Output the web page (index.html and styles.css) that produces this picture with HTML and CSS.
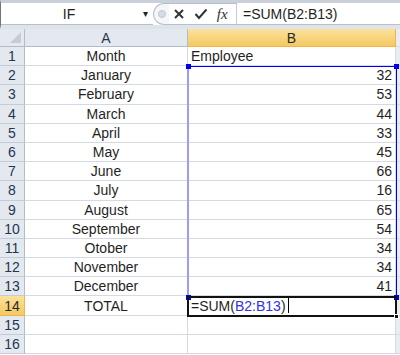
FILE: index.html
```html
<!DOCTYPE html>
<html lang="en">
  <head>
    <meta charset="UTF-8" />
    <title>SUM formula</title>
    <link rel="stylesheet" href="styles.css">
  </head>
  <body>
    <div class="formula-bar">
      <div class="name-box">
        <span class="name">IF</span>
        <span class="drop">&#9662;</span>
      </div>
      <div class="grip"><span class="dot"></span></div>
      <div class="tools">
        <svg class="ico" width="12" height="12" viewBox="0 0 12 12">
          <path d="M2 2 L10 10 M10 2 L2 10" stroke="#333" stroke-width="2" />
        </svg>
        <svg class="ico" width="14" height="12" viewBox="0 0 14 12">
          <path d="M1.5 6 L5 10 L12.5 1.5" stroke="#333" stroke-width="2" fill="none" />
        </svg>
        <span class="fx">fx</span>
      </div>
      <div class="formula">=SUM(B2:B13)</div>
    </div>

    <div class="sheet">
      <div class="corner"><span class="tri"></span></div>
      <div class="col-head">A</div>
      <div class="col-head active">B</div>
      <div class="edge"></div>

      <div class="row-head">1</div><div class="cell center">Month</div><div class="cell">Employee</div><div class="edge"></div>
      <div class="row-head">2</div><div class="cell center">January</div><div class="cell num">32</div><div class="edge"></div>
      <div class="row-head">3</div><div class="cell center">February</div><div class="cell num">53</div><div class="edge"></div>
      <div class="row-head">4</div><div class="cell center">March</div><div class="cell num">44</div><div class="edge"></div>
      <div class="row-head">5</div><div class="cell center">April</div><div class="cell num">33</div><div class="edge"></div>
      <div class="row-head">6</div><div class="cell center">May</div><div class="cell num">45</div><div class="edge"></div>
      <div class="row-head">7</div><div class="cell center">June</div><div class="cell num">66</div><div class="edge"></div>
      <div class="row-head">8</div><div class="cell center">July</div><div class="cell num">16</div><div class="edge"></div>
      <div class="row-head">9</div><div class="cell center">August</div><div class="cell num">65</div><div class="edge"></div>
      <div class="row-head">10</div><div class="cell center">September</div><div class="cell num">54</div><div class="edge"></div>
      <div class="row-head">11</div><div class="cell center">Otober</div><div class="cell num">34</div><div class="edge"></div>
      <div class="row-head">12</div><div class="cell center">November</div><div class="cell num">34</div><div class="edge"></div>
      <div class="row-head">13</div><div class="cell center">December</div><div class="cell num">41</div><div class="edge"></div>
      <div class="row-head active">14</div><div class="cell center">TOTAL</div><div class="cell editing">=SUM(<span class="ref">B2:B13</span>)<span class="caret"></span></div><div class="edge"></div>
      <div class="row-head">15</div><div class="cell"></div><div class="cell"></div><div class="edge"></div>
      <div class="row-head">16</div><div class="cell"></div><div class="cell"></div><div class="edge"></div>

      <!-- range picked by the formula -->
      <div class="range">
        <span class="knob tl"></span>
        <span class="knob tr"></span>
        <span class="knob bl"></span>
        <span class="knob br"></span>
      </div>
      <!-- active cell B14 -->
      <div class="active-cell"><span class="handle"></span></div>
    </div>
  </body>
</html>
```

FILE: styles.css
```css
:root {
  --grid: #d4d9e2;
  --head: #e4e9f0;
  --head-line: #b3bccb;
  --text: #1f1f1f;
  --range: #0000ee;
}

* {
  margin: 0;
  padding: 0;
  box-sizing: border-box;
}

body {
  width: 400px;
  height: 355px;
  overflow: hidden;
  background: #fff;
  font-family: "Liberation Sans", Arial, sans-serif;
  font-size: 14px;
  color: var(--text);
}

/* formula bar */
.formula-bar {
  height: 29px;
  display: flex;
  background: #fff;
  border-top: 3px solid #c9d0da;
  border-bottom: 4px solid #dfe4eb;
  border-left: 1px solid #6d7684;
}

.name-box {
  width: 152px;
  display: flex;
  align-items: center;
  border-bottom: 1px solid #b8c0cc;
}

.name {
  flex: 1;
  text-align: center;
  font-size: 14px;
}

.drop {
  width: 16px;
  font-size: 10px;
  color: #222;
  text-align: center;
}

.grip {
  width: 16px;
  border: 1px solid #b7bfcc;
  border-right: none;
  border-radius: 11px 0 0 11px;
  display: flex;
  align-items: center;
  justify-content: center;
  background: #f4f6f9;
}

.dot {
  width: 8px;
  height: 8px;
  border-radius: 50%;
  background: #d6dbe2;
  border: 1px solid #c2c8d2;
}

.tools {
  width: 68px;
  display: flex;
  align-items: center;
  justify-content: space-around;
  padding-right: 4px;
  border-top: 1px solid #b7bfcc;
  border-bottom: 1px solid #b7bfcc;
  border-right: 1px solid #c3cad5;
}

.fx {
  font-family: "Liberation Serif", "Times New Roman", serif;
  font-style: italic;
  font-size: 15px;
  color: #333;
}

.formula {
  flex: 1;
  display: flex;
  align-items: center;
  padding-left: 6px;
  border-bottom: 1px solid #b8c0cc;
}

/* sheet grid */
.sheet {
  position: relative;
  display: grid;
  grid-template-columns: 25px 163px 208px 4px;
  grid-template-rows: 18px repeat(16, 19.2px);
}

.corner {
  background: var(--head);
  border-right: 1px solid var(--head-line);
  border-bottom: 1px solid var(--head-line);
  position: relative;
}

.tri {
  position: absolute;
  right: 3px;
  bottom: 3px;
  width: 0;
  height: 0;
  border-left: 11px solid transparent;
  border-bottom: 11px solid #c6ccd5;
}

.col-head {
  background: var(--head);
  border-right: 1px solid var(--head-line);
  border-bottom: 1px solid var(--head-line);
  display: flex;
  align-items: center;
  justify-content: center;
  font-size: 14px;
  color: #24364f;
}

.col-head.active,
.row-head.active {
  background: linear-gradient(#fbe29d, #f5c862);
  border-color: #f2b449;
  color: #2a2a2a;
}

.row-head {
  background: var(--head);
  border-right: 1px solid var(--head-line);
  border-bottom: 1px solid #c5ccd7;
  display: flex;
  align-items: center;
  justify-content: center;
  font-size: 14px;
  color: #24364f;
}

.edge {
  background: #e9ecf0;
  border-bottom: 1px solid #d7dbe1;
}

.cell {
  border-right: 1px solid var(--grid);
  border-bottom: 1px solid var(--grid);
  display: flex;
  align-items: center;
  padding: 0 3px;
  white-space: nowrap;
  overflow: hidden;
}

.cell.center {
  justify-content: center;
}

.cell.num {
  justify-content: flex-end;
}

.editing .ref {
  color: #3030ee;
}

.caret {
  display: inline-block;
  width: 1px;
  height: 15px;
  margin-left: 2px;
  background: #000;
}

/* overlays, positioned inside .sheet */
.range {
  position: absolute;
  left: 187px;
  top: 37px;
  width: 210px;
  height: 231px;
  border-top: 1px solid var(--range);
  border-right: 1px solid var(--range);
  border-left: 2px solid #9a9cf6;
}

.knob {
  position: absolute;
  width: 5px;
  height: 5px;
  background: var(--range);
}

.knob.tl { left: -3px; top: -3px; }
.knob.tr { right: -3px; top: -3px; }
.knob.bl { left: -3px; bottom: -3px; }
.knob.br { right: -3px; bottom: -3px; }

.active-cell {
  position: absolute;
  left: 187px;
  top: 267px;
  width: 210px;
  height: 21px;
  border: 2px solid #111;
}

.handle {
  position: absolute;
  right: -4px;
  bottom: -4px;
  width: 5px;
  height: 5px;
  background: #111;
  border: 1px solid #fff;
}
```
